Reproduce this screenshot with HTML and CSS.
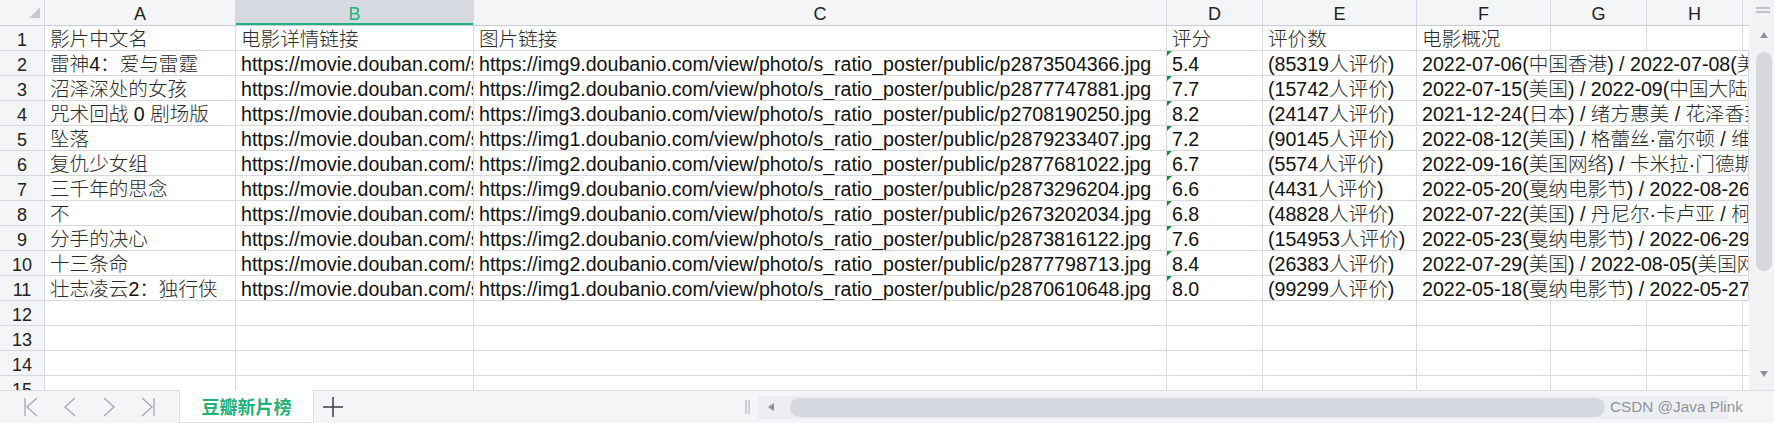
FILE: index.html
```html
<!DOCTYPE html>
<html lang="zh-CN">
<head>
<meta charset="utf-8">
<title>豆瓣新片榜</title>
<link rel="stylesheet" href="styles.css">
</head>
<body>
<div class="main">
  <div class="sheet">
    <div class="c hd corner"><svg width="45" height="25" viewBox="0 0 45 25"><polygon points="40,7 40,18 29,18" fill="#c6c9d0"/></svg></div>
    <div class="c hd">A</div>
    <div class="c hd sel">B</div>
    <div class="c hd">C</div>
    <div class="c hd">D</div>
    <div class="c hd">E</div>
    <div class="c hd">F</div>
    <div class="c hd">G</div>
    <div class="c hd">H</div>
    <div class="c hd i"></div>

    <div class="c rn">1</div>
    <div class="c"><span class="zh">影片中文名</span></div>
    <div class="c"><span class="zh">电影详情链接</span></div>
    <div class="c"><span class="zh">图片链接</span></div>
    <div class="c"><span class="zh">评分</span></div>
    <div class="c"><span class="zh">评价数</span></div>
    <div class="c"><span class="zh">电影概况</span></div>
    <div class="c"></div>
    <div class="c"></div>
    <div class="c i"></div>

    <div class="c rn">2</div>
    <div class="c"><span class="zh">雷神</span>4<span class="zh">：爱与雷霆</span></div>
    <div class="c">https://movie.douban.com/subject/35235502/</div>
    <div class="c">https://img9.doubanio.com/view/photo/s_ratio_poster/public/p2873504366.jpg</div>
    <div class="c t">5.4</div>
    <div class="c">(85319<span class="zh">人评价</span>)</div>
    <div class="c f4">2022-07-06(<span class="zh">中国香港</span>) / 2022-07-08(<span class="zh">美国</span>) / <span class="zh">克里斯</span>·<span class="zh">海姆斯沃斯</span></div>

    <div class="c rn">3</div>
    <div class="c"><span class="zh">沼泽深处的女孩</span></div>
    <div class="c">https://movie.douban.com/subject/26980760/</div>
    <div class="c">https://img2.doubanio.com/view/photo/s_ratio_poster/public/p2877747881.jpg</div>
    <div class="c t">7.7</div>
    <div class="c">(15742<span class="zh">人评价</span>)</div>
    <div class="c f4">2022-07-15(<span class="zh">美国</span>) / 2022-09(<span class="zh">中国大陆</span>) / <span class="zh">黛西</span>·<span class="zh">埃德加</span>-<span class="zh">琼斯</span></div>

    <div class="c rn">4</div>
    <div class="c"><span class="zh">咒术回战</span> 0 <span class="zh">剧场版</span></div>
    <div class="c">https://movie.douban.com/subject/34874465/</div>
    <div class="c">https://img3.doubanio.com/view/photo/s_ratio_poster/public/p2708190250.jpg</div>
    <div class="c t">8.2</div>
    <div class="c">(24147<span class="zh">人评价</span>)</div>
    <div class="c f4">2021-12-24(<span class="zh">日本</span>) / <span class="zh">绪方惠美</span> / <span class="zh">花泽香菜</span> / <span class="zh">内田雄马</span></div>

    <div class="c rn">5</div>
    <div class="c"><span class="zh">坠落</span></div>
    <div class="c">https://movie.douban.com/subject/35355853/</div>
    <div class="c">https://img1.doubanio.com/view/photo/s_ratio_poster/public/p2879233407.jpg</div>
    <div class="c t">7.2</div>
    <div class="c">(90145<span class="zh">人评价</span>)</div>
    <div class="c f4">2022-08-12(<span class="zh">美国</span>) / <span class="zh">格蕾丝</span>·<span class="zh">富尔顿</span> / <span class="zh">维吉妮</span>·<span class="zh">加德纳</span></div>

    <div class="c rn">6</div>
    <div class="c"><span class="zh">复仇少女组</span></div>
    <div class="c">https://movie.douban.com/subject/35207690/</div>
    <div class="c">https://img2.doubanio.com/view/photo/s_ratio_poster/public/p2877681022.jpg</div>
    <div class="c t">6.7</div>
    <div class="c">(5574<span class="zh">人评价</span>)</div>
    <div class="c f4">2022-09-16(<span class="zh">美国网络</span>) / <span class="zh">卡米拉</span>·<span class="zh">门德斯</span> / <span class="zh">玛雅</span>·<span class="zh">霍克</span></div>

    <div class="c rn">7</div>
    <div class="c"><span class="zh">三千年的思念</span></div>
    <div class="c">https://movie.douban.com/subject/26642269/</div>
    <div class="c">https://img9.doubanio.com/view/photo/s_ratio_poster/public/p2873296204.jpg</div>
    <div class="c t">6.6</div>
    <div class="c">(4431<span class="zh">人评价</span>)</div>
    <div class="c f4">2022-05-20(<span class="zh">戛纳电影节</span>) / 2022-08-26(<span class="zh">美国</span>) / <span class="zh">蒂尔达</span>·<span class="zh">斯文顿</span></div>

    <div class="c rn">8</div>
    <div class="c"><span class="zh">不</span></div>
    <div class="c">https://movie.douban.com/subject/35051512/</div>
    <div class="c">https://img9.doubanio.com/view/photo/s_ratio_poster/public/p2673202034.jpg</div>
    <div class="c t">6.8</div>
    <div class="c">(48828<span class="zh">人评价</span>)</div>
    <div class="c f4">2022-07-22(<span class="zh">美国</span>) / <span class="zh">丹尼尔</span>·<span class="zh">卡卢亚</span> / <span class="zh">柯克</span>·<span class="zh">帕尔默</span></div>

    <div class="c rn">9</div>
    <div class="c"><span class="zh">分手的决心</span></div>
    <div class="c">https://movie.douban.com/subject/30211998/</div>
    <div class="c">https://img2.doubanio.com/view/photo/s_ratio_poster/public/p2873816122.jpg</div>
    <div class="c t">7.6</div>
    <div class="c">(154953<span class="zh">人评价</span>)</div>
    <div class="c f4">2022-05-23(<span class="zh">戛纳电影节</span>) / 2022-06-29(<span class="zh">韩国</span>) / <span class="zh">汤唯</span></div>

    <div class="c rn">10</div>
    <div class="c"><span class="zh">十三条命</span></div>
    <div class="c">https://movie.douban.com/subject/35209731/</div>
    <div class="c">https://img2.doubanio.com/view/photo/s_ratio_poster/public/p2877798713.jpg</div>
    <div class="c t">8.4</div>
    <div class="c">(26383<span class="zh">人评价</span>)</div>
    <div class="c f4">2022-07-29(<span class="zh">美国</span>) / 2022-08-05(<span class="zh">美国网络</span>) / <span class="zh">维果</span>·<span class="zh">莫腾森</span></div>

    <div class="c rn">11</div>
    <div class="c"><span class="zh">壮志凌云</span>2<span class="zh">：独行侠</span></div>
    <div class="c">https://movie.douban.com/subject/1889243/</div>
    <div class="c">https://img1.doubanio.com/view/photo/s_ratio_poster/public/p2870610648.jpg</div>
    <div class="c t">8.0</div>
    <div class="c">(99299<span class="zh">人评价</span>)</div>
    <div class="c f4">2022-05-18(<span class="zh">戛纳电影节</span>) / 2022-05-27(<span class="zh">美国</span>) / <span class="zh">汤姆</span>·<span class="zh">克鲁斯</span></div>

    <div class="c rn">12</div>
    <div class="c"></div><div class="c"></div><div class="c"></div><div class="c"></div><div class="c"></div><div class="c"></div><div class="c"></div><div class="c"></div><div class="c i"></div>
    <div class="c rn">13</div>
    <div class="c"></div><div class="c"></div><div class="c"></div><div class="c"></div><div class="c"></div><div class="c"></div><div class="c"></div><div class="c"></div><div class="c i"></div>
    <div class="c rn">14</div>
    <div class="c"></div><div class="c"></div><div class="c"></div><div class="c"></div><div class="c"></div><div class="c"></div><div class="c"></div><div class="c"></div><div class="c i"></div>
    <div class="c rn">15</div>
    <div class="c"></div><div class="c"></div><div class="c"></div><div class="c"></div><div class="c"></div><div class="c"></div><div class="c"></div><div class="c"></div><div class="c i"></div>
  </div>

  <div class="vscroll">
    <svg class="vs-grip" width="14" height="6" viewBox="0 0 14 6"><path d="M0 1H14M0 5H14" stroke="#8d929b" stroke-width="1"/></svg>
    <svg class="vs-up" width="8" height="6" viewBox="0 0 8 6"><polygon points="4,0 8,6 0,6" fill="#8d929b"/></svg>
    <div class="vs-thumb"></div>
    <svg class="vs-down" width="8" height="6" viewBox="0 0 8 6"><polygon points="0,0 8,0 4,6" fill="#8d929b"/></svg>
  </div>
</div>

<div class="tabbar">
  <div class="nav">
    <button class="navbtn" aria-label="first"><svg width="16" height="20" viewBox="0 0 16 20"><path d="M2 1V19M14 1L4 10L14 19" fill="none" stroke="#a4a8af" stroke-width="1.3"/></svg></button>
    <button class="navbtn" aria-label="prev"><svg width="16" height="20" viewBox="0 0 16 20"><path d="M13 1L3 10L13 19" fill="none" stroke="#a4a8af" stroke-width="1.3"/></svg></button>
    <button class="navbtn" aria-label="next"><svg width="16" height="20" viewBox="0 0 16 20"><path d="M3 1L13 10L3 19" fill="none" stroke="#a4a8af" stroke-width="1.3"/></svg></button>
    <button class="navbtn" aria-label="last"><svg width="16" height="20" viewBox="0 0 16 20"><path d="M2 1L12 10L2 19M14 1V19" fill="none" stroke="#a4a8af" stroke-width="1.3"/></svg></button>
  </div>
  <div class="tab">豆瓣新片榜</div>
  <div class="add"><svg width="20" height="20" viewBox="0 0 20 20"><path d="M10 0V20M0 10H20" stroke="#3a3f47" stroke-width="1.5"/></svg></div>
  <svg class="hs-grip" width="5" height="14" viewBox="0 0 5 14"><path d="M1 0V14M4 0V14" stroke="#a4a8af" stroke-width="1"/></svg>
  <div class="hscroll">
    <svg class="hs-left" width="6" height="8" viewBox="0 0 6 8"><polygon points="0,4 6,0 6,8" fill="#8d929b"/></svg>
    <div class="hs-thumb"></div>
  </div>
  <div class="watermark">CSDN @Java Plink</div>
</div>
</body>
</html>
```

FILE: styles.css
```css
* {
  box-sizing: border-box;
  margin: 0;
  padding: 0;
}

html,
body {
  width: 1774px;
  height: 423px;
  overflow: hidden;
  background: #ffffff;
}

body {
  font-family: "Liberation Sans", Arial, "Noto Sans CJK SC", sans-serif;
  color: #111111;
  display: flex;
  flex-direction: column;
}

.main {
  display: flex;
  height: 390px;
  flex: none;
}

.sheet {
  width: 1749px;
  height: 390px;
  overflow: hidden;
  display: grid;
  grid-template-columns: 45px 191px 238px 693px 96px 154px 134px 96px 96px 6px;
  grid-template-rows: 26px;
  grid-auto-rows: 25px;
  align-content: start;
  flex: none;
}

.c {
  position: relative;
  border-right: 1px solid #d6d9e1;
  border-bottom: 1px solid #d6d9e1;
  font-size: 19.6px;
  line-height: 22px;
  padding: 2px 0 0 5px;
  white-space: nowrap;
  overflow: hidden;
}

.c.i {
  border-right: none;
}

.f4 {
  grid-column: span 4;
}

.zh {
  font-family: "Noto Sans CJK SC", sans-serif;
  font-weight: 300;
  line-height: 0;
  color: #2a2a2a;
}

.hd {
  background: #f4f5f7;
  color: #222222;
  font-size: 18px;
  line-height: 24px;
  padding: 2px 0 0;
  text-align: center;
  border-bottom-color: #c9cdd6;
}

.hd.sel {
  background: #d6d9e0;
  color: #1fb27a;
  box-shadow: inset 0 -2px 0 #1fb27a;
}

.corner {
  padding: 0;
}

.corner svg {
  display: block;
}

.rn {
  background: #f4f5f7;
  color: #222222;
  font-size: 18px;
  padding: 3px 0 0;
  text-align: center;
}

.t::before {
  content: "";
  position: absolute;
  left: 0;
  top: 0;
  border-top: 5px solid #1f8a3e;
  border-right: 5px solid transparent;
}

/* vertical scrollbar */
.vscroll {
  width: 25px;
  height: 390px;
  background: #f2f3f5;
  display: flex;
  flex-direction: column;
  align-items: flex-start;
  padding-left: 7px;
  flex: none;
}

.vs-grip {
  margin-top: 7px;
  display: block;
}

.vs-up {
  margin-top: 19px;
  margin-left: 4px;
  display: block;
}

.vs-thumb {
  margin-top: 14px;
  width: 16px;
  height: 219px;
  border-radius: 8px;
  background: #d5d8df;
}

.vs-down {
  margin-top: 100px;
  margin-left: 4px;
  display: block;
}

/* sheet tab bar */
.tabbar {
  position: relative;
  height: 33px;
  flex: none;
  background: #f4f5f7;
  border-top: 1px solid #dcdfe5;
  display: flex;
  align-items: center;
}

.nav {
  width: 179px;
  height: 100%;
  display: flex;
  align-items: center;
  padding-left: 11px;
  flex: none;
}

.navbtn {
  width: 39px;
  height: 20px;
  border: none;
  background: transparent;
  display: flex;
  align-items: center;
  justify-content: center;
}

.navbtn svg {
  display: block;
}

.tab {
  width: 135px;
  height: 33px;
  margin-top: -1px;
  align-self: flex-start;
  background: #ffffff;
  border-left: 1px solid #dcdfe5;
  border-right: 1px solid #dcdfe5;
  border-bottom: 1px solid #dcdfe5;
  color: #1fb27a;
  font-family: "Noto Sans CJK SC", sans-serif;
  font-weight: 700;
  font-size: 18px;
  line-height: 32px;
  text-align: center;
  flex: none;
}

.add {
  margin-left: 9px;
  width: 20px;
  height: 20px;
  flex: none;
}

.add svg {
  display: block;
}

.hs-grip {
  margin-left: 402px;
  display: block;
  flex: none;
}

.hscroll {
  margin-left: 8px;
  width: 970px;
  height: 23px;
  background: #eceef1;
  display: flex;
  align-items: center;
  padding-left: 10px;
  flex: none;
}

.hs-left {
  display: block;
}

.hs-thumb {
  margin-left: 16px;
  width: 815px;
  height: 19px;
  border-radius: 10px;
  background: #d5d8df;
}

.watermark {
  position: absolute;
  left: 1610px;
  top: 7px;
  font-size: 15.3px;
  line-height: 17px;
  color: rgba(110, 114, 120, 0.75);
  white-space: nowrap;
}
```
